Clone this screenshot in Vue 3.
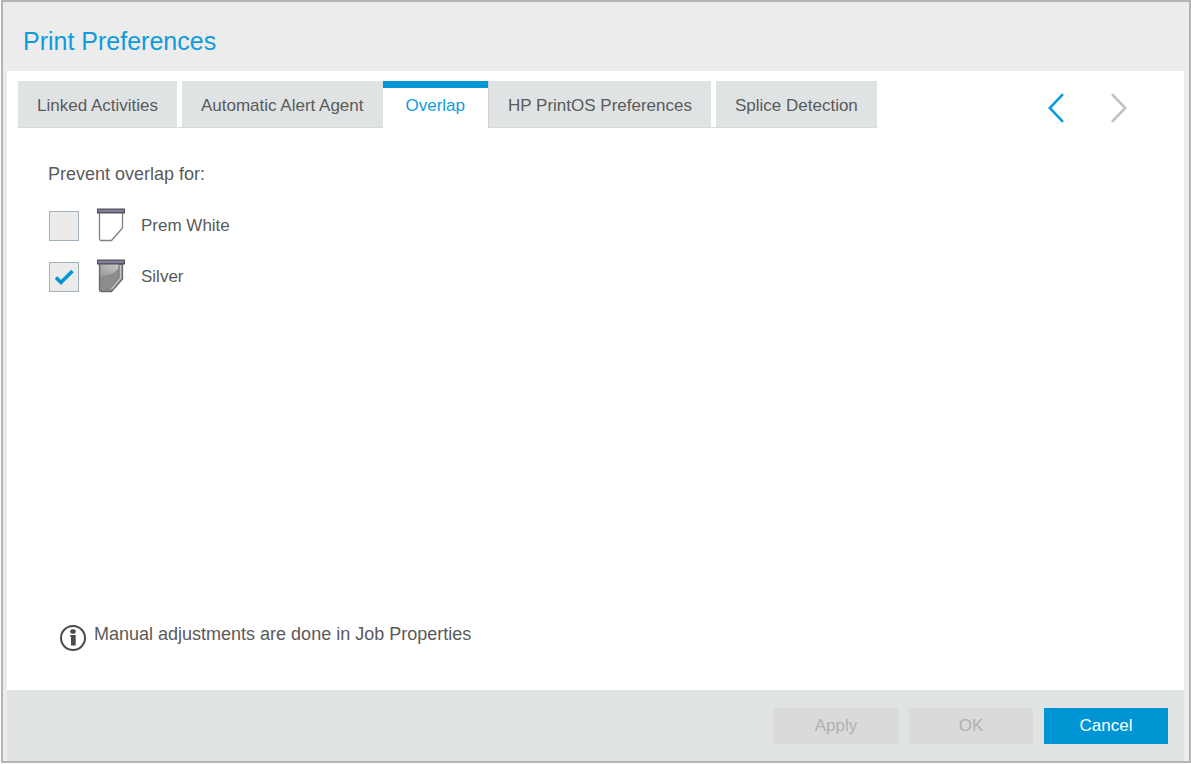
<script setup>
import { ref } from 'vue'

const tabs = ['Linked Activities', 'Automatic Alert Agent', 'Overlap', 'HP PrintOS Preferences', 'Splice Detection']
const active = ref(2)
const inks = ref([
  { id: 'white', label: 'Prem White', checked: false },
  { id: 'silver', label: 'Silver', checked: true },
])

function step(delta) {
  active.value = Math.min(tabs.length - 1, Math.max(0, active.value + delta))
}
</script>

<template>
  <div class="window">
    <header class="header">
      <h1>Print Preferences</h1>
    </header>

    <main class="panel">
      <div class="bar">
        <div class="tabs" role="tablist">
          <button
            v-for="(tab, i) in tabs"
            :key="tab"
            type="button"
            role="tab"
            class="tab"
            :class="{ active: i === active }"
            :aria-selected="i === active"
            @click="active = i"
          >{{ tab }}</button>
        </div>
        <nav class="arrows" aria-label="Scroll tabs">
          <button type="button" class="arrow" aria-label="Previous" @click="step(-1)">
            <svg width="18" height="30" viewBox="0 0 18 30"><path d="M16 1.200 2.800 15 16 28.800" fill="none" stroke="#0f9ce0" stroke-width="2.600" /></svg>
          </button>
          <button type="button" class="arrow" aria-label="Next" disabled>
            <svg width="18" height="30" viewBox="0 0 18 30"><path d="M2 1.200 15.200 15 2 28.800" fill="none" stroke="#c2c2c2" stroke-width="2.600" /></svg>
          </button>
        </nav>
      </div>

      <fieldset class="options">
        <legend>Prevent overlap for:</legend>
        <div v-for="ink in inks" :key="ink.id" class="option">
          <input :id="ink.id" v-model="ink.checked" type="checkbox">
          <label :for="ink.id">
            <svg v-if="ink.id === 'white'" width="30" height="34" viewBox="0 0 30 34">
              <path d="M3.500 5v26q0 1.500 1.500 1.500h10.500L26.500 20V5" fill="#fff" stroke="#808080" stroke-width="1.300" stroke-linejoin="round" />
              <rect x="1.500" y="1" width="27" height="4" fill="url(#lid)" stroke="#50505c" />
            </svg>
            <svg v-else width="30" height="34" viewBox="0 0 30 34">
              <defs>
                <linearGradient id="lid" x1="0" x2="0" y1="0" y2="1">
                  <stop offset="0" stop-color="#5b5c70" />
                  <stop offset="0.500" stop-color="#8d90ae" />
                  <stop offset="1" stop-color="#4d4d5c" />
                </linearGradient>
                <linearGradient id="shine" x1="0" x2="1" y1="1" y2="0">
                  <stop offset="0" stop-color="#9b9c99" />
                  <stop offset="1" stop-color="#c6c7c5" />
                </linearGradient>
              </defs>
              <path d="M3.500 5v26q0 1.500 1.500 1.500h10.500L26.500 20V5z" fill="#8d8e8b" stroke="#686866" stroke-width="1.300" stroke-linejoin="round" />
              <path d="M4.500 5h18v4C19 14.500 13 16 4.500 17z" fill="url(#shine)" />
              <path d="M24.600 6v13.200L15.500 30" fill="none" stroke="#c4c5c3" stroke-width="1.600" />
              <path d="M22.800 7v12L16 27" fill="none" stroke="#7c7d7a" stroke-width="1" />
              <rect x="1.500" y="1" width="27" height="4" fill="url(#lid)" stroke="#50505c" />
            </svg>
            <span>{{ ink.label }}</span>
          </label>
        </div>
      </fieldset>

      <p class="note">
        <svg width="28" height="28" viewBox="0 0 28 28" aria-hidden="true">
          <circle cx="14" cy="14" r="12" fill="none" stroke="#4a4a4a" stroke-width="2" />
          <ellipse cx="14" cy="7.500" rx="2.800" ry="2.300" fill="#4a4a4a" />
          <path d="M11.200 11h5.500v10.500h-4.700V12.500h-.8z" fill="#4a4a4a" />
        </svg>
        <span>Manual adjustments are done in Job Properties</span>
      </p>
    </main>

    <footer class="footer">
      <button type="button" class="action" disabled>Apply</button>
      <button type="button" class="action" disabled>OK</button>
      <button type="button" class="action primary">Cancel</button>
    </footer>
  </div>
</template>

<style>
body {
  background: #fff;
}
</style>

<style scoped>
.window {
  box-sizing: border-box;
  display: flex;
  flex-direction: column;
  min-height: calc(100vh - 1px);
  margin: 0 0 1px 1px;
  padding: 0 5px 0 4px;
  border: 2px solid #b4b4b4;
  background: #ececec;
  color: #5a5a5a;
  font: 17px/20px "Liberation Sans", Arial, sans-serif;
}
button {
  font: inherit;
  color: inherit;
  border: 0;
  border-radius: 0;
  background: none;
  padding: 0;
  margin: 0;
  cursor: pointer;
}
button:disabled {
  cursor: default;
}
.header {
  padding: 24px 16px 15px;
}
h1 {
  margin: 0;
  color: #0f9bdc;
  font-size: 25px;
  line-height: 30px;
  font-weight: 400;
}
.panel {
  flex: 1;
  display: flex;
  flex-direction: column;
  background: #fff;
  padding: 10px 11px 38px;
}
.bar {
  display: flex;
  justify-content: space-between;
  align-items: flex-start;
}
.tabs {
  display: flex;
  background: linear-gradient(#d9dadb, #d9dadb) bottom / 100% 1px no-repeat;
}
.tab {
  box-sizing: border-box;
  height: 47px;
  padding: 3px 19px 0;
  background: #dfe3e4;
  border-bottom: 1px solid #d6d8d9;
  white-space: nowrap;
}
.tab + .tab:not(.active) {
  margin-left: 5px;
}
.tab.active + .tab {
  margin-left: 0;
  border-left: 1px solid #cfd1d2;
}
.tab.active {
  padding: 0 23px 4px;
  background: #fff;
  color: #0f9bdc;
  border-top: 7px solid #0096d6;
  border-bottom-color: #fff;
}
.arrows {
  display: flex;
  gap: 45px;
  padding: 12px 45px 0 0;
}
.arrow,
.arrow svg {
  display: block;
}
.options {
  border: 0;
  margin: 36px 0 0;
  padding: 0 30px;
}
legend {
  padding: 0;
  margin-bottom: 24px;
  font-size: 18px;
}
.option {
  display: flex;
  align-items: flex-start;
  height: 51px;
}
.option input {
  appearance: none;
  box-sizing: border-box;
  width: 30px;
  height: 30px;
  margin: 3px 17px 0 1px;
  border: 1px solid #a3b1ba;
  background: #ebebeb;
}
.option input:checked {
  background: #ebebeb url("data:image/svg+xml,%3Csvg xmlns='http://www.w3.org/2000/svg' viewBox='0 0 28 28'%3E%3Cpath d='M6 14.500l5 5L22.500 8' fill='none' stroke='%230096d6' stroke-width='3.600'/%3E%3C/svg%3E") center / 28px 28px no-repeat;
}
.option label {
  display: flex;
  align-items: center;
  gap: 15px;
}
.option span {
  padding-top: 2px;
}
.note {
  display: flex;
  align-items: flex-start;
  gap: 7px;
  margin: auto 0 0;
  padding-left: 41px;
  font-size: 18px;
}
.note svg {
  margin-top: 1px;
}
.note span {
  padding-top: 1px;
}
.footer {
  display: flex;
  justify-content: flex-end;
  gap: 11px;
  padding: 18px 16px 17px;
  background: #dfe3e4;
}
.action {
  width: 124px;
  height: 36px;
  background: #dadada;
  color: #b0b0b0;
}
.action.primary {
  background: #0096d6;
  color: #fff;
}
</style>
